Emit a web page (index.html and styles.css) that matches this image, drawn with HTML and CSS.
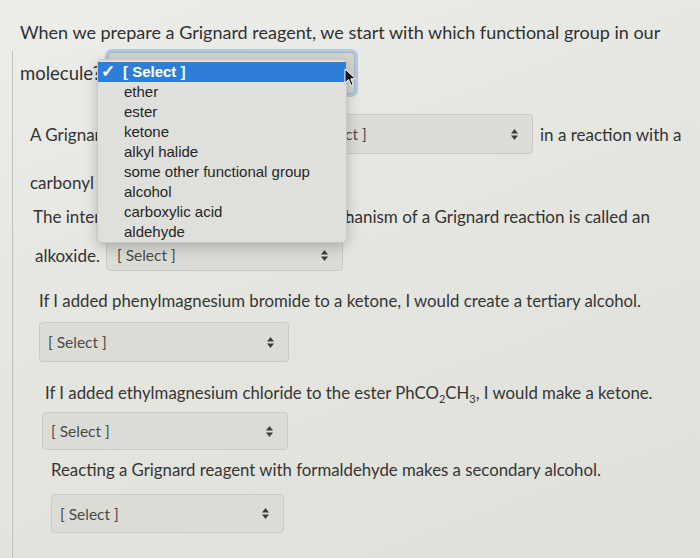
FILE: index.html
```html
<!DOCTYPE html>
<html lang="en">
<head>
<meta charset="utf-8">
<title>Grignard quiz</title>
<link rel="stylesheet" href="styles.css">
</head>
<body>
<div class="page">
  <p class="q1-text">When we prepare a Grignard reagent, we start with which functional group in our</p>
  <div class="card">
    <div class="row q1-row">
      <span class="word">molecule?</span>
      <div class="select focused">
        <span class="sel-text">[ Select ]</span>
        <svg class="arrows" viewBox="0 0 7 11" width="7" height="11"><polygon points="0,4.5 3.5,0 7,4.5"/><polygon points="0,6.5 3.5,11 7,6.5"/></svg>
      </div>
    </div>

    <div class="q2">
      <div class="row r1">
        <span class="lead">A Grignard reagent acts as a</span>
        <div class="select s-q2a">
          <span class="sel-text">[ Select ]</span>
          <svg class="arrows" viewBox="0 0 7 11" width="7" height="11"><polygon points="0,4.5 3.5,0 7,4.5"/><polygon points="0,6.5 3.5,11 7,6.5"/></svg>
        </div>
        <span>in a reaction with a</span>
      </div>
      <div class="row r2"><span>carbonyl compound.</span></div>
      <div class="row r3"><span class="lead3">The intermediate that is formed in the mec</span><span>hanism of a Grignard reaction is called an</span></div>
      <div class="row r4">
        <span>alkoxide.</span>
        <div class="select s-q2b">
          <span class="sel-text">[ Select ]</span>
          <svg class="arrows" viewBox="0 0 7 11" width="7" height="11"><polygon points="0,4.5 3.5,0 7,4.5"/><polygon points="0,6.5 3.5,11 7,6.5"/></svg>
        </div>
      </div>
    </div>

    <div class="q q3">
      <p class="q-text">If I added phenylmagnesium bromide to a ketone, I would create a tertiary alcohol.</p>
      <div class="select s-q3">
        <span class="sel-text">[ Select ]</span>
        <svg class="arrows" viewBox="0 0 7 11" width="7" height="11"><polygon points="0,4.5 3.5,0 7,4.5"/><polygon points="0,6.5 3.5,11 7,6.5"/></svg>
      </div>
    </div>

    <div class="q q4">
      <p class="q-text">If I added ethylmagnesium chloride to the ester PhCO<sub>2</sub>CH<sub>3</sub>, I would make a ketone.</p>
      <div class="select s-q4">
        <span class="sel-text">[ Select ]</span>
        <svg class="arrows" viewBox="0 0 7 11" width="7" height="11"><polygon points="0,4.5 3.5,0 7,4.5"/><polygon points="0,6.5 3.5,11 7,6.5"/></svg>
      </div>
    </div>

    <div class="q q5">
      <p class="q-text">Reacting a Grignard reagent with formaldehyde makes a secondary alcohol.</p>
      <div class="select s-q5">
        <span class="sel-text">[ Select ]</span>
        <svg class="arrows" viewBox="0 0 7 11" width="7" height="11"><polygon points="0,4.5 3.5,0 7,4.5"/><polygon points="0,6.5 3.5,11 7,6.5"/></svg>
      </div>
    </div>
  </div>

  <ul class="popup">
    <li class="opt chosen"><span class="check">✓</span>[ Select ]</li>
    <li class="opt">ether</li>
    <li class="opt">ester</li>
    <li class="opt">ketone</li>
    <li class="opt">alkyl halide</li>
    <li class="opt">some other functional group</li>
    <li class="opt">alcohol</li>
    <li class="opt">carboxylic acid</li>
    <li class="opt">aldehyde</li>
  </ul>

  <svg class="cursor" viewBox="0 0 12 19" width="12" height="19"><path d="M1 1 L1 15 L4.5 11.5 L7 17.5 L9.2 16.6 L6.8 10.8 L11.5 10.8 Z" fill="#111" stroke="#fff" stroke-width="1"/></svg>
</div>
</body>
</html>
```

FILE: styles.css
```css
* { box-sizing: border-box; }
html, body { margin: 0; padding: 0; }
body {
  width: 700px;
  height: 558px;
  overflow: hidden;
  background: linear-gradient(160deg, #ededea 0%, #e5e6e0 45%, #dfe0d9 100%);
  font-family: Lato, "Open Sans", sans-serif;
  color: #333;
}
.page {
  position: relative;
  width: 700px;
  height: 558px;
  padding-top: 20px;
}
.q1-text {
  margin: 0 0 0 20px;
  font-size: 18px;
  line-height: 24px;
  color: #303030;
  white-space: nowrap;
}
.card {
  margin-left: 12px;
  margin-top: 7px;
  height: 520px;
  border-left: 1px solid #c2c3bc;
}
.row {
  display: flex;
  align-items: center;
  white-space: nowrap;
  font-size: 17px;
}
.q1-row {
  margin-left: 7px;
  height: 44px;
  font-size: 18.5px;
  color: #303030;
}
.q1-row .word { width: 88px; flex: none; }

.select {
  display: flex;
  align-items: center;
  justify-content: space-between;
  height: 40px;
  padding: 0 14px 0 8px;
  background: #dcdcd6;
  border: 1px solid #cacac3;
  border-radius: 4px;
  font-size: 15.5px;
  color: #4a4a4a;
  flex: none;
}
.select .arrows { fill: #3c3c3c; flex: none; }
.select.focused {
  width: 247px;
  height: 42px;
  background: #d4d5cf;
  border: 1px solid #9fb8cf;
  box-shadow: 0 0 0 3px #b3c9dc;
}

.q2 { padding-left: 17px; margin-top: 18px; }
.r1 { height: 42px; }
.r1 .lead { width: 265px; flex: none; }
.s-q2a { width: 238px; margin: 0 7px 0 0; padding-left: 12px; }
.r2 { height: 30px; margin-top: 12px; }
.r3 { height: 30px; margin-top: 4px; padding-left: 3px; }
.r3 .lead3 { width: 312px; flex: none; }
.r4 { height: 34px; margin-top: 7px; padding-left: 5px; }
.s-q2b { width: 237px; height: 32px; margin-left: 6px; padding-left: 10px; }

.q { margin-top: 15px; }
.q-text {
  margin: 0;
  font-size: 16.8px;
  line-height: 22px;
  color: #353535;
  white-space: nowrap;
}
.q-text sub { font-size: 11px; line-height: 0; }
.q3 { padding-left: 26px; margin-top: 18px; }
.s-q3 { width: 250px; margin-top: 10px; }
.q4 { padding-left: 32px; margin-top: 20px; }
.s-q4 { width: 246px; height: 38px; margin-top: 8px; margin-left: -3px; }
.q5 { padding-left: 38px; margin-top: 9px; }
.s-q5 { width: 233px; height: 39px; margin-top: 13px; }

.popup {
  position: absolute;
  left: 97px;
  top: 59px;
  width: 250px;
  height: 184px;
  margin: 0;
  padding: 2px 0;
  list-style: none;
  background: #dfdfdb;
  border: 1px solid #c8c8c3;
  border-radius: 5px;
  box-shadow: 0 4px 14px rgba(0, 0, 0, 0.22);
  font-family: "Liberation Sans", Arial, sans-serif;
  font-size: 15px;
  color: #262626;
}
.opt {
  height: 20px;
  line-height: 20px;
  padding-left: 26px;
  white-space: nowrap;
}
.opt.chosen {
  position: relative;
  background: #2c7ed8;
  color: #fff;
  font-weight: bold;
  padding-left: 25px;
}
.check {
  position: absolute;
  left: 3px;
  top: 0;
  font-size: 17px;
}
.cursor {
  position: absolute;
  left: 344px;
  top: 68px;
}
```
